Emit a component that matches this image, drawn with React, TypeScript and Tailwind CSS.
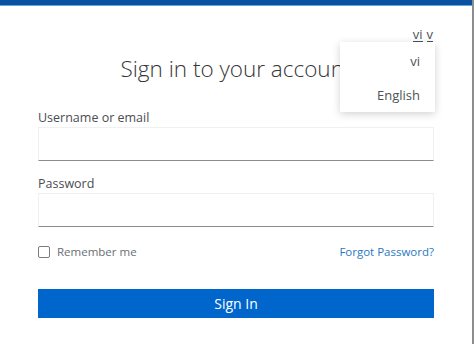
import { useState } from 'react';

export default function App() {
  const [remember, setRemember] = useState(false);

  return (
    <div className="w-[474px] h-[344px] bg-white flex flex-col overflow-hidden border-r-2 border-[#8d8d8d] font-['Open_Sans',sans-serif]">
      {/* Top accent bar */}
      <div className="h-[5px] bg-[#0b4f9f] shrink-0" />
      <div className="h-px bg-[#5aa9e6] shrink-0" />

      <div className="flex flex-col px-[38px]">
        {/* Language switcher */}
        <div className="relative flex justify-end mt-[20px] h-[18px] leading-[16px] text-[13px] text-[#4d5258]">
          <div className="flex gap-[4px] pr-px">
            <span className="border-b border-[#4d5258] h-[16px]">vi</span>
            <span className="border-b border-[#4d5258] h-[16px]">v</span>
          </div>
          <div className="absolute top-[16px] right-[-1px] w-[95px] h-[70px] bg-white shadow-[0_2px_8px_rgba(0,0,0,0.18)] pt-[2px] pr-[15px] z-10 text-[13px] text-[#4d5258]">
            <div className="h-[34px] leading-[34px] text-right">vi</div>
            <div className="h-[34px] leading-[34px] text-right">English</div>
          </div>
        </div>

        {/* Title */}
        <h1 className="mt-[10px] h-[30px] leading-[30px] text-center text-[22.5px] font-light text-[#363636]">
          Sign in to your account
        </h1>

        {/* Username */}
        <label className="mt-[25px] h-[18px] leading-[18px] text-[12.5px] text-[#4a4d52]">Username or email</label>
        <input
          type="text"
          className="h-[34px] border border-[#f0f0f0] border-b-[#8a8d90] outline-none px-2 text-[13px]"
        />

        {/* Password */}
        <label className="mt-[14px] h-[18px] leading-[18px] text-[12.5px] text-[#4a4d52]">Password</label>
        <input
          type="password"
          className="h-[34px] border border-[#f0f0f0] border-b-[#8a8d90] outline-none px-2 text-[13px]"
        />

        {/* Remember / forgot */}
        <div className="mt-[16px] h-[18px] flex items-center justify-between text-[11.5px]">
          <label className="flex items-center gap-[7px] text-[#6a6e73] cursor-pointer">
            <span
              onClick={() => setRemember(!remember)}
              className="w-[12px] h-[12px] rounded-[2px] border border-[#7d7d7d] bg-white"
            />
            Remember me
          </label>
          <a className="text-[#2b78c2] cursor-pointer">Forgot Password?</a>
        </div>

        {/* Submit */}
        <button className="mt-[28px] h-[29px] bg-[#0066cc] text-white text-[14px] leading-[29px]">
          Sign In
        </button>
      </div>
    </div>
  );
}
